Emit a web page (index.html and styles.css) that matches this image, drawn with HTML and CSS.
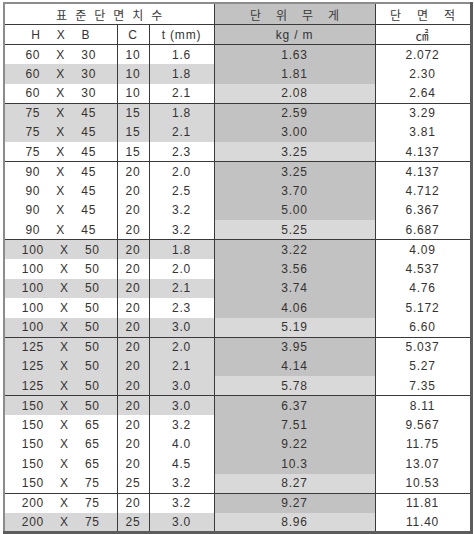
FILE: index.html
```html
<!DOCTYPE html>
<html lang="ko">
<head>
<meta charset="utf-8">
<link rel="stylesheet" href="styles.css">
</head>
<body>
<table class="spec">
  <colgroup>
    <col class="c1"><col class="c2"><col class="c3"><col class="c4"><col class="c5">
  </colgroup>
  <thead>
    <tr class="h1">
      <th colspan="3" class="sp"><div class="kr"><span>표</span><span>준</span><span>단</span><span>면</span><span>치</span><span>수</span></div></th>
      <th class="kg"><div class="kr wide"><span>단</span><span>위</span><span>무</span><span>게</span></div></th>
      <th><div class="kr wider"><span>단</span><span>면</span><span>적</span></div></th>
    </tr>
    <tr class="h2">
      <th class="vl"><div class="hb"><span>H</span><span>X</span><span>B</span></div></th>
      <th>C</th>
      <th>t (mm)</th>
      <th class="kg">kg / m</th>
      <th class="unit">㎠</th>
    </tr>
  </thead>
  <tbody>
    <tr class="g"><td class="vl"><div class="hb"><span>60</span><span>X</span><span>30</span></div></td><td>10</td><td>1.6</td><td class="kg">1.63</td><td>2.072</td></tr>
    <tr class="a"><td class="vl"><div class="hb"><span>60</span><span>X</span><span>30</span></div></td><td>10</td><td>1.8</td><td class="kg">1.81</td><td>2.30</td></tr>
    <tr class="end"><td class="vl"><div class="hb"><span>60</span><span>X</span><span>30</span></div></td><td>10</td><td>2.1</td><td class="kg">2.08</td><td>2.64</td></tr>

    <tr class="a"><td class="vl"><div class="hb"><span>75</span><span>X</span><span>45</span></div></td><td>15</td><td>1.8</td><td class="kg">2.59</td><td>3.29</td></tr>
    <tr class="a"><td class="vl"><div class="hb"><span>75</span><span>X</span><span>45</span></div></td><td>15</td><td>2.1</td><td class="kg">3.00</td><td>3.81</td></tr>
    <tr class="end"><td class="vl"><div class="hb"><span>75</span><span>X</span><span>45</span></div></td><td>15</td><td>2.3</td><td class="kg">3.25</td><td>4.137</td></tr>

    <tr><td class="vl"><div class="hb"><span>90</span><span>X</span><span>45</span></div></td><td>20</td><td>2.0</td><td class="kg">3.25</td><td>4.137</td></tr>
    <tr><td class="vl"><div class="hb"><span>90</span><span>X</span><span>45</span></div></td><td>20</td><td>2.5</td><td class="kg">3.70</td><td>4.712</td></tr>
    <tr><td class="vl"><div class="hb"><span>90</span><span>X</span><span>45</span></div></td><td>20</td><td>3.2</td><td class="kg">5.00</td><td>6.367</td></tr>
    <tr class="end"><td class="vl"><div class="hb"><span>90</span><span>X</span><span>45</span></div></td><td>20</td><td>3.2</td><td class="kg">5.25</td><td>6.687</td></tr>

    <tr class="a"><td class="vl"><div class="hb"><span>100</span><span>X</span><span>50</span></div></td><td>20</td><td>1.8</td><td class="kg">3.22</td><td>4.09</td></tr>
    <tr><td class="vl"><div class="hb"><span>100</span><span>X</span><span>50</span></div></td><td>20</td><td>2.0</td><td class="kg">3.56</td><td>4.537</td></tr>
    <tr class="a"><td class="vl"><div class="hb"><span>100</span><span>X</span><span>50</span></div></td><td>20</td><td>2.1</td><td class="kg">3.74</td><td>4.76</td></tr>
    <tr><td class="vl"><div class="hb"><span>100</span><span>X</span><span>50</span></div></td><td>20</td><td>2.3</td><td class="kg">4.06</td><td>5.172</td></tr>
    <tr class="a end"><td class="vl"><div class="hb"><span>100</span><span>X</span><span>50</span></div></td><td>20</td><td>3.0</td><td class="kg">5.19</td><td>6.60</td></tr>

    <tr class="a"><td class="vl"><div class="hb"><span>125</span><span>X</span><span>50</span></div></td><td>20</td><td>2.0</td><td class="kg">3.95</td><td>5.037</td></tr>
    <tr class="a"><td class="vl"><div class="hb"><span>125</span><span>X</span><span>50</span></div></td><td>20</td><td>2.1</td><td class="kg">4.14</td><td>5.27</td></tr>
    <tr class="a end"><td class="vl"><div class="hb"><span>125</span><span>X</span><span>50</span></div></td><td>20</td><td>3.0</td><td class="kg">5.78</td><td>7.35</td></tr>

    <tr class="a"><td class="vl"><div class="hb"><span>150</span><span>X</span><span>50</span></div></td><td>20</td><td>3.0</td><td class="kg">6.37</td><td>8.11</td></tr>
    <tr><td class="vl"><div class="hb"><span>150</span><span>X</span><span>65</span></div></td><td>20</td><td>3.2</td><td class="kg">7.51</td><td>9.567</td></tr>
    <tr><td class="vl"><div class="hb"><span>150</span><span>X</span><span>65</span></div></td><td>20</td><td>4.0</td><td class="kg">9.22</td><td>11.75</td></tr>
    <tr><td class="vl"><div class="hb"><span>150</span><span>X</span><span>65</span></div></td><td>20</td><td>4.5</td><td class="kg">10.3</td><td>13.07</td></tr>
    <tr class="end"><td class="vl"><div class="hb"><span>150</span><span>X</span><span>75</span></div></td><td>25</td><td>3.2</td><td class="kg">8.27</td><td>10.53</td></tr>

    <tr><td class="vl"><div class="hb"><span>200</span><span>X</span><span>75</span></div></td><td>20</td><td>3.2</td><td class="kg">9.27</td><td>11.81</td></tr>
    <tr class="a last"><td class="vl"><div class="hb"><span>200</span><span>X</span><span>75</span></div></td><td>25</td><td>3.0</td><td class="kg">8.96</td><td>11.40</td></tr>
  </tbody>
</table>
</body>
</html>
```

FILE: styles.css
```css
html, body {
  margin: 0;
  padding: 0;
  background: #ffffff;
}

body {
  padding: 2px 0 0 3px;
  font-family: "Liberation Sans", "Noto Sans CJK KR", sans-serif;
  font-size: 12px;
  color: #333333;
}

.spec {
  border-collapse: collapse;
  table-layout: fixed;
  width: 469px;
  border-top: 2px solid #8c8c8c;
  border-left: 2px solid #8c8c8c;
  border-right: 3px solid #5c5c5c;
  border-bottom: 3px solid #5c5c5c;
}

.c1 { width: 113px; }
.c2 { width: 32px; }
.c3 { width: 65px; }
.c4 { width: 161px; }
.c5 { width: 96px; }

.spec th,
.spec td {
  padding: 0;
  text-align: center;
  vertical-align: middle;
  font-weight: normal;
  border-left: 1px solid #3a3a3a;
  background: #ffffff;
  white-space: nowrap;
  letter-spacing: 0.8px;
}

.spec .h1 th {
  height: 20px;
  border-bottom: 1px solid #3a3a3a;
}

.spec .h2 th {
  height: 18px;
  border-bottom: 1px solid #3a3a3a;
}

.spec tbody tr {
  height: 19.5px;
}

.spec tbody tr.end td {
  border-bottom: 1px solid #3a3a3a;
}

.spec tr.a td {
  background: #d7d7d7;
}

.spec .kg,
.spec tr.a td.kg {
  background: #c2c2c2;
}

.spec tbody tr.end td.kg,
.spec tbody tr.last td.kg {
  background: #d9d9d9;
}

.spec tr td:last-child,
.spec tr.a td:last-child {
  background: #ffffff;
}

.spec .vl {
  border-right: 1px solid #3a3a3a;
}

.kr {
  display: flex;
  justify-content: center;
  gap: 8px;
  font-family: "Noto Sans CJK KR", sans-serif;
  font-size: 12px;
  letter-spacing: 0;
  color: #3a3a3a;
}

.kr.wide {
  gap: 15px;
}

.kr.wider {
  gap: 16px;
}

.hb {
  display: flex;
  justify-content: center;
  gap: 16px;
}

.unit {
  font-family: "Noto Sans CJK KR", sans-serif;
  font-size: 13px;
}
```
